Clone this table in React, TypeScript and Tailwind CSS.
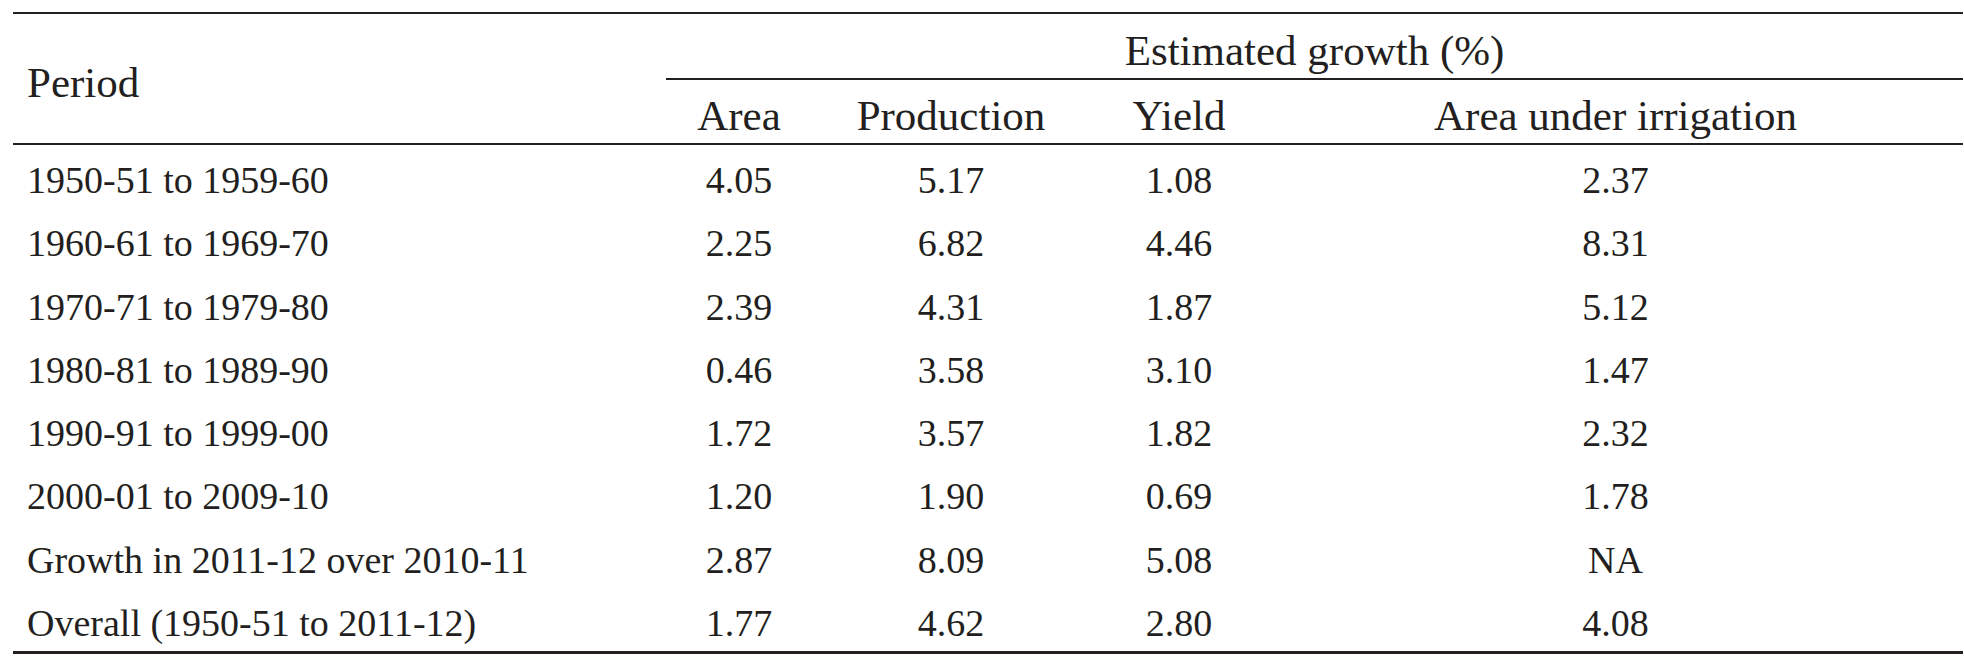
import React from "react";

const rows: [string, string, string, string, string][] = [
  ["1950-51 to 1959-60", "4.05", "5.17", "1.08", "2.37"],
  ["1960-61 to 1969-70", "2.25", "6.82", "4.46", "8.31"],
  ["1970-71 to 1979-80", "2.39", "4.31", "1.87", "5.12"],
  ["1980-81 to 1989-90", "0.46", "3.58", "3.10", "1.47"],
  ["1990-91 to 1999-00", "1.72", "3.57", "1.82", "2.32"],
  ["2000-01 to 2009-10", "1.20", "1.90", "0.69", "1.78"],
  ["Growth in 2011-12 over 2010-11", "2.87", "8.09", "5.08", "NA"],
  ["Overall (1950-51 to 2011-12)", "1.77", "4.62", "2.80", "4.08"],
];

export default function App() {
  return (
    <div className="bg-white w-[1964px] h-[662px] pt-[12px] pl-[13px] pr-[1px] font-['Liberation_Serif',serif] text-[#231f20]">
      <div className="border-t-2 border-b-[3px] border-[#231f20]">
        <div className="grid grid-cols-[653px_146px_278px_178px_1fr] border-b-2 border-[#231f20] text-[43px] leading-[43px]">
          <div className="row-span-2 pl-[14px] pt-[47px]">Period</div>
          <div className="col-span-4 h-[66px] pt-[15px] text-center border-b-2 border-[#231f20]">
            Estimated growth (%)
          </div>
          <div className="h-[63px] pt-[14px] text-center">Area</div>
          <div className="h-[63px] pt-[14px] text-center">Production</div>
          <div className="h-[63px] pt-[14px] text-center">Yield</div>
          <div className="h-[63px] pt-[14px] text-center">Area under irrigation</div>
        </div>
        {rows.map((r, i) => (
          <div
            key={i}
            className="grid grid-cols-[653px_146px_278px_178px_1fr] h-[63.3px] pt-[16px] text-[38px] leading-[38px]"
          >
            <div className="pl-[14px]">{r[0]}</div>
            <div className="text-center">{r[1]}</div>
            <div className="text-center">{r[2]}</div>
            <div className="text-center">{r[3]}</div>
            <div className="text-center">{r[4]}</div>
          </div>
        ))}
      </div>
    </div>
  );
}
